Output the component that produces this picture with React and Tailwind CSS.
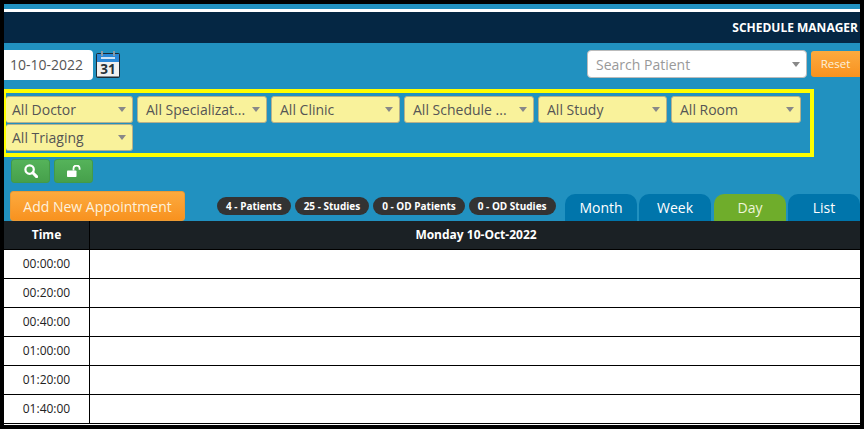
const font = { fontFamily: '"Open Sans", sans-serif' }

const filters = [
  { label: 'All Doctor', box: 'w-[127px] pl-[6px] border-l-0' },
  { label: 'All Specializat...', box: 'w-[130px] pl-[8px]' },
  { label: 'All Clinic', box: 'w-[129px] pl-[8px]' },
  { label: 'All Schedule ...', box: 'w-[130px] pl-[8px]' },
  { label: 'All Study', box: 'w-[129px] pl-[8px]' },
  { label: 'All Room', box: 'w-[130px] pl-[8px]' },
  { label: 'All Triaging', box: 'w-[127px] pl-[6px] border-l-0' },
]

const pills = ['4 - Patients', '25 - Studies', '0 - OD Patients', '0 - OD Studies']
const tabs = [
  { label: 'Month', cls: 'bg-[#0075ab] text-white' },
  { label: 'Week', cls: 'ml-[2px] bg-[#0075ab] text-white' },
  { label: 'Day', cls: 'ml-[3px] bg-[#6fad2b] text-[#eef5d8]' },
  { label: 'List', cls: 'ml-[2px] bg-[#0075ab] text-white' },
]
const times = ['00:00:00', '00:20:00', '00:40:00', '01:00:00', '01:20:00', '01:40:00']

const Caret = () => (
  <span className="w-0 h-0 border-x-[4px] border-x-transparent border-t-[5px] border-t-[#888]" />
)

const CalendarIcon = () => (
  <svg width="24" height="27" viewBox="0 0 24 27" className="ml-[3px] mt-[1px]">
    <rect x="0" y="2" width="24" height="25" rx="2" fill="#1c2b36" />
    <rect x="1" y="3" width="22" height="8" fill="#2a88d8" />
    <rect x="1" y="11" width="22" height="14.5" fill="#f0f0f0" />
    <rect x="5" y="0" width="2" height="5" fill="#8a9aa5" />
    <rect x="17" y="0" width="2" height="5" fill="#8a9aa5" />
    <rect x="5" y="6" width="14" height="2" fill="#cfe4f5" />
    <text x="12" y="23" textAnchor="middle" fontSize="13.5" fontWeight="700" fill="#26323a" style={font}>31</text>
  </svg>
)

const SearchGlyph = () => (
  <svg width="14" height="14" viewBox="0 0 14 14" fill="none" stroke="currentColor">
    <circle cx="5.6" cy="5.6" r="4.2" strokeWidth="2.2" />
    <path d="M8.8 8.8 L12.6 12.6" strokeWidth="3" strokeLinecap="round" />
  </svg>
)

const UnlockGlyph = () => (
  <svg width="14" height="12" viewBox="0 0 14 12" fill="none">
    <rect x="0" y="5.5" width="9.5" height="6.5" rx="0.8" fill="currentColor" />
    <path d="M6.5 5.5 V3.6 A3 3 0 0 1 12.6 3.6 V4.8" stroke="currentColor" strokeWidth="1.8" />
  </svg>
)

const greenBtn = 'w-[39px] h-[24px] rounded-[3px] bg-gradient-to-b from-[#55b35a] to-[#46a04b] border border-[#439a48] flex items-center justify-center text-white'

export default function App() {
  return (
    <div className="w-[864px] h-[429px] bg-black p-[4px] overflow-hidden text-[#555]" style={font}>
      <div className="h-[421px] flex flex-col bg-[#2191c0] overflow-hidden">
        {/* top strip */}
        <div className="h-[5px]" />
        <div className="h-[3px] bg-white" />
        <div className="h-[31px] bg-[#052744] flex items-center justify-end pr-[2px] text-white text-[12px] font-bold">
          SCHEDULE MANAGER
        </div>

        {/* date and search */}
        <div className="h-[46px] pt-[7px] flex items-start">
          <div className="w-[89px] h-[30px] bg-white rounded-r-[4px] pl-[6px] text-[14px] leading-[30px]">10-10-2022</div>
          <CalendarIcon />
          <div className="ml-auto w-[220px] h-[28px] bg-white border border-[#bbb] rounded-[4px] pl-[8px] pr-[6px] flex items-center justify-between text-[14px] text-[#999]">
            Search Patient
            <Caret />
          </div>
          <div className="ml-[4px] mt-[1px] w-[49px] h-[26px] rounded-l-[3px] bg-gradient-to-b from-[#fcaa3d] to-[#f8921e] text-[#fdf1dd] text-[11.5px] flex items-center justify-center">
            Reset
          </div>
        </div>

        {/* filters */}
        <div className="w-[810px] h-[68px] border-[4px] border-l-2 border-[#ffff00] pt-[3px] flex flex-wrap content-start gap-x-[4px] gap-y-[1px]">
          {filters.map((f) => (
            <div key={f.label} className={`${f.box} h-[27px] bg-[#f9f29b] border border-[#b5b08a] rounded-[3px] pr-[6px] flex items-center justify-between text-[14px] text-[#555]`}>
              <span className="whitespace-nowrap">{f.label}</span>
              <Caret />
            </div>
          ))}
        </div>

        {/* search + lock */}
        <div className="flex gap-[4px] pl-[7px] pt-[2px] h-[34px]">
          <div className={greenBtn}>
            <SearchGlyph />
          </div>
          <div className={greenBtn}>
            <UnlockGlyph />
          </div>
        </div>

        {/* appointment, counts, tabs */}
        <div className="h-[30px] flex items-end pl-[6px]">
          <div className="w-[175px] h-[30px] rounded-[3px] bg-gradient-to-b from-[#fcaa3d] to-[#f8921e] border border-[#ec9a33] text-[#fdf1dd] text-[14px] flex items-center justify-center">
            Add New Appointment
          </div>
          <div className="ml-[32px] mb-[6px] flex gap-[4px]">
            {pills.map((p) => (
              <span key={p} className="h-[18px] px-[9px] rounded-full bg-[#333] text-white text-[10px] font-bold leading-[18px] whitespace-nowrap">
                {p}
              </span>
            ))}
          </div>
          <div className="ml-auto flex">
            {tabs.map((t) => (
              <div key={t.label} className={`w-[72px] h-[27px] rounded-t-[10px] text-[14px] flex items-center justify-center ${t.cls}`}>
                {t.label}
              </div>
            ))}
          </div>
        </div>

        {/* day table */}
        <div className="flex h-[29px] shrink-0 bg-[#1b2125] border-b border-black text-white text-[12px] font-bold">
          <div className="w-[86px] border-r border-black flex items-center justify-center">Time</div>
          <div className="flex-1 pl-[2px] flex items-center justify-center">Monday 10-Oct-2022</div>
        </div>
        {times.map((t) => (
          <div key={t} className="flex h-[29px] shrink-0 bg-white border-b border-black text-[12px] text-[#222]">
            <div className="w-[86px] border-r border-black flex items-center justify-center">{t}</div>
            <div className="flex-1" />
          </div>
        ))}
        <div className="flex-1 bg-white" />
      </div>
    </div>
  )
}
